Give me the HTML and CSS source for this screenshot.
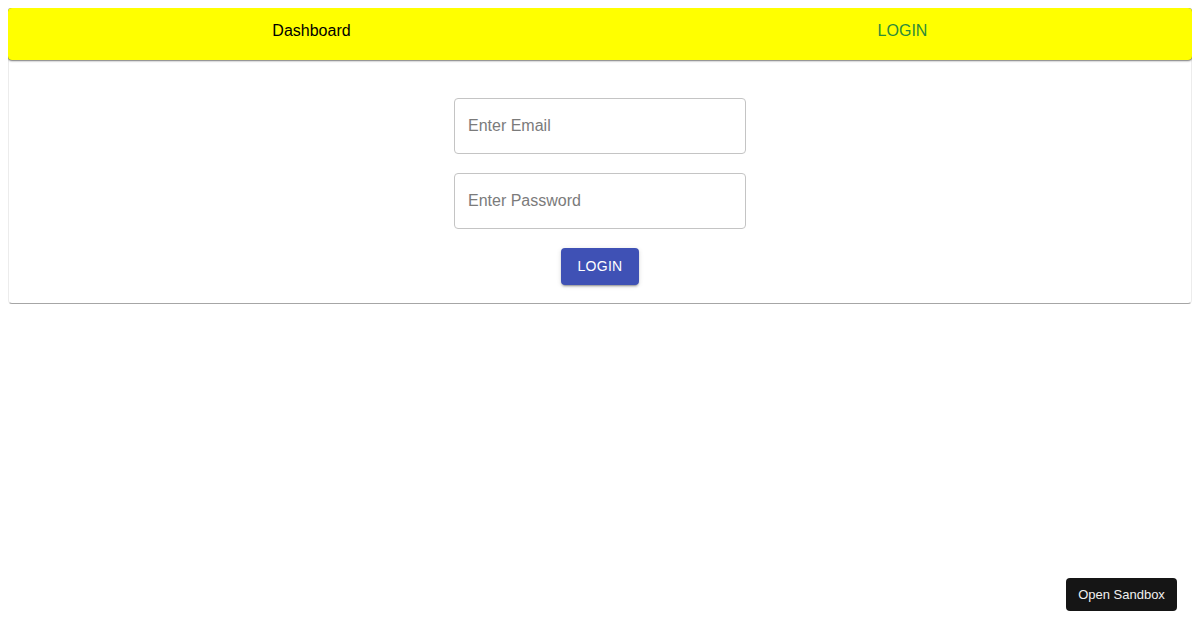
FILE: index.html
```html
<!DOCTYPE html>
<html lang="en">
<head>
    <meta charset="UTF-8">
    <title>Dashboard - Login</title>
    <link rel="stylesheet" href="styles.css">
</head>
<body>
    <!-- Card -->
    <div class="card">
        <!-- Header -->
        <header class="app-bar">
            <a class="nav-title" href="#">Dashboard</a>
            <a class="nav-login" href="#">LOGIN</a>
        </header>

        <!-- Login form -->
        <form class="login-form">
            <input class="text-field" type="email" placeholder="Enter Email">
            <input class="text-field" type="password" placeholder="Enter Password">
            <button class="login-button" type="button">LOGIN</button>
        </form>
    </div>

    <a class="sandbox-button" href="#">Open Sandbox</a>
</body>
</html>
```

FILE: styles.css
```css
body {
    font-family: "Liberation Sans", Arial, Helvetica, sans-serif;
    margin: 8px;
    background-color: white;
}

.card {
    background-color: white;
    border-radius: 4px;
    border: 1px solid #ececec;
    border-top: none;
    border-bottom: 1px solid #a6a6a6;
    width: 1184px;
    box-sizing: border-box;
}

.app-bar {
    background-color: yellow;
    height: 52px;
    margin: 0 -1px;
    border-radius: 4px;
    display: grid;
    grid-template-columns: 591px 591px;
    align-items: center;
    padding-left: 8px;
    overflow: hidden;
    box-shadow: 0 1px 2px rgba(0, 0, 0, 0.5), 0 0 1px rgba(0, 0, 0, 0.6);
}

.app-bar a {
    text-align: center;
    text-decoration: none;
    font-size: 16px;
    padding-bottom: 7px;
}

.nav-title {
    color: black;
}

.nav-login {
    color: #2e8b3a;
}

.login-form {
    display: flex;
    flex-direction: column;
    align-items: center;
    gap: 19px;
    padding: 38px 0 18px;
}

.text-field {
    width: 292px;
    height: 56px;
    box-sizing: border-box;
    border: 1px solid #c4c4c4;
    border-radius: 4px;
    padding: 0 13px;
    font-family: "Liberation Sans", Arial, Helvetica, sans-serif;
    font-size: 16px;
    color: #333;
    outline: none;
}

.text-field::placeholder {
    color: #7b7b7b;
}

.login-button {
    background-color: #3f51b5;
    color: white;
    border: none;
    border-radius: 4px;
    width: 78px;
    height: 37px;
    padding-bottom: 2px;
    font-family: "Liberation Sans", Arial, Helvetica, sans-serif;
    font-size: 14px;
    letter-spacing: 0.3px;
    cursor: pointer;
    box-shadow: 0 3px 1px -2px rgba(0, 0, 0, 0.2), 0 2px 2px 0 rgba(0, 0, 0, 0.14), 0 1px 5px 0 rgba(0, 0, 0, 0.12);
}

.sandbox-button {
    position: fixed;
    right: 23px;
    bottom: 19px;
    width: 111px;
    height: 33px;
    display: flex;
    align-items: center;
    justify-content: center;
    background-color: #151515;
    color: #f0f0f0;
    border-radius: 4px;
    font-size: 13px;
    text-decoration: none;
}
```
